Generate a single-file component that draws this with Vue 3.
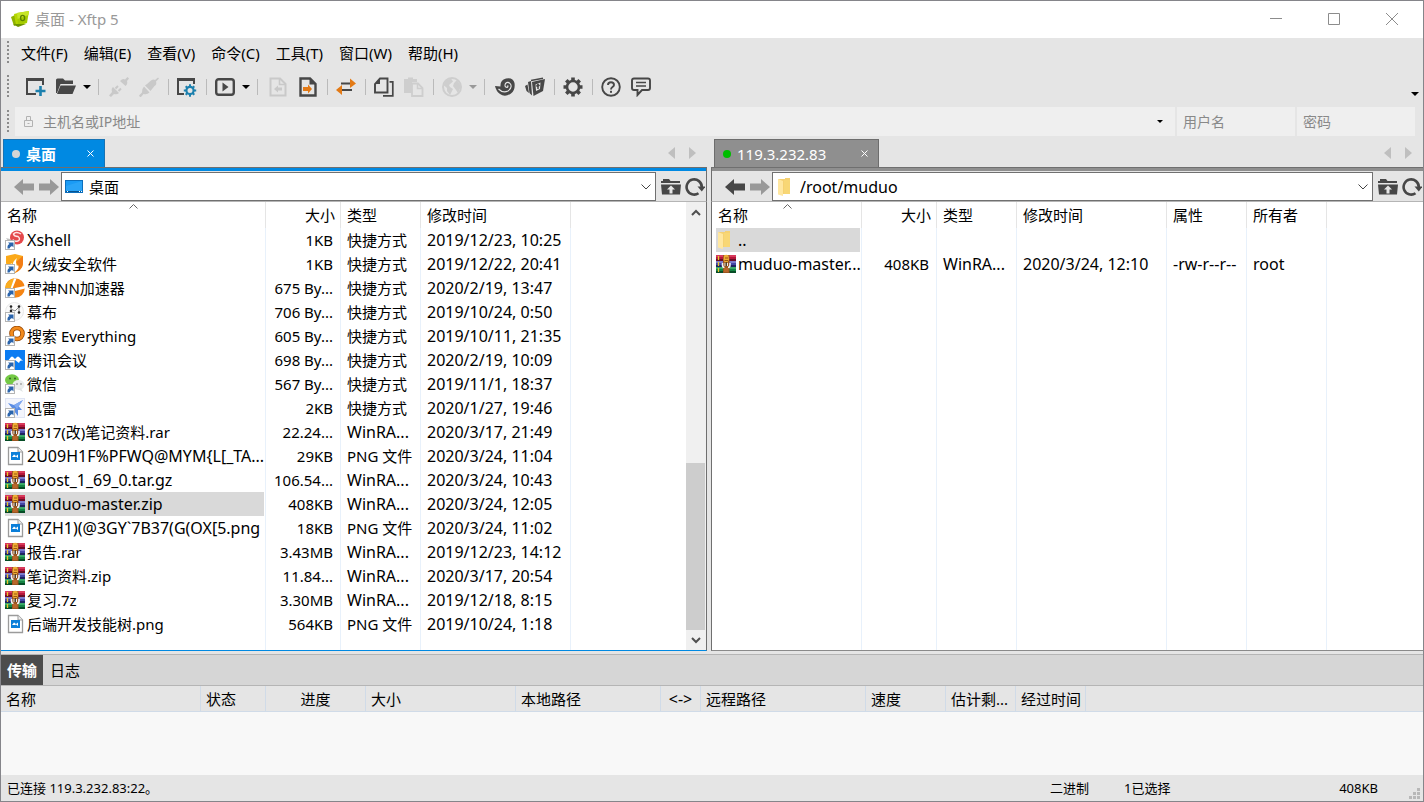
<script setup>
import { ref } from 'vue'

const dk = '#474747'
const badge = '<rect x="0.5" y="10.5" width="9" height="9" fill="#fff" stroke="#b4b4b4"/><path d="M2.500 18.500V16.500Q2.500 14.500 4.500 14L3 12.500H8.500V17.500L7 16Q5 16.500 4.500 18.500Z" fill="#2a64ac"/>'

const icons = {
  logo: '<path d="M1 8 5 6 7 16 4 17Z" fill="#8fb300"/><path d="M4 5 8 4 9 17 6 16Z" fill="#b4d600"/><path d="M7 4 19 2 17 14 8 17Z" fill="#a5cc00"/><path d="M7 4 19 2 18.500 6 7.500 10Z" fill="#c6e526"/><ellipse cx="12.600" cy="9" rx="2" ry="2.600" fill="none" stroke="#5c8300" stroke-width="1.400"/><path d="M3 15 16 15 8 18Z" fill="#6e9400"/>',
  newsession: `<path d="M0 1H18V4H0Z" fill="${dk}"/><path d="M1 3V17H10M17 3V8" fill="none" stroke="${dk}" stroke-width="2"/><path d="M14.500 9V19M9.500 14H19.500" stroke="#1c80ae" stroke-width="2.600"/>`,
  open: `<path d="M0 16V3Q0 1.500 1.500 1.500H7L9 3.500H17V7H4.500L1 16Z" fill="${dk}"/><path d="M4.500 8.500H20L16.500 17H1Z" fill="${dk}"/>`,
  unlink: '<g fill="#c9c9c9"><path d="M0 18.500 3 15Q2 11.500 4 10L10 16Q8 18 5 17L2 20Z"/><path d="M11 4Q14 1 16 2.500L18.500 0 20 1.500 18 4Q19 7 16.500 9Z"/></g><path d="M6.500 11.500 9 9M9.500 14 12 11.500" stroke="#c9c9c9" stroke-width="2"/>',
  link: '<path d="M1 20 0 18.500 3 15.500Q2.500 12 5 9.500L10.500 15.500Q8 18 4.500 17L2 20Z" fill="#c9c9c9"/><path d="M6 8.500 8 7 12 3.500Q14.500 2 16 3L19 0.500 20 1.500 17 4.500Q18 7.500 15.500 9L11.500 14Z" fill="#c9c9c9"/>',
  prefs: `<path d="M0 1H18V4H0Z" fill="${dk}"/><path d="M1 3V17H7M17 3V7" fill="none" stroke="${dk}" stroke-width="2"/><g stroke="#1c80ae" fill="none"><circle cx="13" cy="13.500" r="3.600" stroke-width="2.200"/><path d="M13 7.300V10M13 17V19.700M6.800 13.500H9.500M16.500 13.500H19.200M8.700 9.200 10.500 11M15.500 16 17.300 17.800M17.300 9.200 15.500 11M10.500 16 8.700 17.800" stroke-width="2"/></g>`,
  play: `<rect x="1.200" y="2.200" width="17.600" height="15.600" rx="2.500" fill="none" stroke="${dk}" stroke-width="2.400"/><path d="M7.500 5.500 13.500 10 7.500 14.500Z" fill="${dk}"/>`,
  docin: '<path d="M2.500 1.500H12L17.500 7V18.500H2.500Z" fill="none" stroke="#c9c9c9" stroke-width="2"/><path d="M11.500 1V7.500H18" fill="none" stroke="#c9c9c9" stroke-width="1.600"/><path d="M6 12 10 8.500V10.500H14V13.500H10V15.500Z" fill="#c9c9c9"/>',
  docout: `<path d="M2.500 1.500H12L17.500 7V18.500H2.500Z" fill="none" stroke="${dk}" stroke-width="2.400"/><path d="M11.500 1V7.500H18Z" fill="${dk}"/><path d="M14 12 10 7.500V10H5V14H10V16.500Z" fill="#e37a16"/>`,
  swap: `<path d="M5 6.500H14M6 13H16" stroke="${dk}" stroke-width="2.200"/><path d="M14 1.500 20 6.500 14 11Z" fill="#e37a16"/><path d="M6 8 0 13 6 18Z" fill="#e37a16"/>`,
  copy: `<path d="M6 1.500H13.500V15.500H1V7Z" fill="none" stroke="${dk}" stroke-width="1.900"/><path d="M1 7 6 1.500V7Z" fill="${dk}"/><path d="M15.500 4.800H18.800V18.800H9" fill="none" stroke="${dk}" stroke-width="1.700"/>`,
  paste: '<path d="M0 2H4V0.500H9V2H13V5H8V16H0Z" fill="#cecece"/><path d="M8 6.500H14L18.500 11V19H8Z" fill="#e5e5e5" stroke="#cecece" stroke-width="1.800"/><path d="M13.500 6.500V11.500H18.500" fill="none" stroke="#cecece" stroke-width="1.500"/>',
  globe: '<circle cx="10" cy="10" r="9" fill="none" stroke="#cecece" stroke-width="2"/><path d="M3 4 9 1.500 11 4.500 7 8 8 10 11 12 8 18 5 14 5 11 1.500 8ZM12 6 15 3 19 9 16 16 14 13 11 9Z" fill="#cecece"/>',
  shell: `<path d="M0 9 5.500 9.500Q5 3 11 1.500 18 0 19.500 6 20.500 13 16 16.500 10 20.500 5 17 1 14 0 9Z" fill="${dk}"/><path d="M3.500 12Q8 16.500 13 14 17.500 11 15.500 7 13 4 10.500 6.500 9 10 12 10.500 13.500 9.500 12.500 8.500" fill="none" stroke="#e5e5e5" stroke-width="1.100"/>`,
  ftp: `<path d="M7 5 20 2 18 14 8.500 19Z" fill="${dk}"/><path d="M3 5 6 4 7 18.500 4.500 16ZM0 9 2.500 7.500 4 16 1.500 14Z" fill="${dk}"/><path d="M6 3.500 18 1.200" stroke="${dk}" stroke-width="1.400"/><path d="M10.500 7.500 15.500 5.500 15 12 11 14Z" fill="#e5e5e5"/><path d="M13 7V12M11.500 9.500 13 7.500 14.500 9" fill="none" stroke="${dk}" stroke-width="1.500"/>`,
  gear: `<path d="M10 0.500V4M10 16V19.500M0.500 10H4M16 10H19.500M3.300 3.300 5.500 5.500M14.500 14.500 16.700 16.700M16.700 3.300 14.500 5.500M5.500 14.500 3.300 16.700" stroke="${dk}" stroke-width="3.600"/><circle cx="10" cy="10" r="6" fill="none" stroke="${dk}" stroke-width="2.600"/>`,
  help: `<circle cx="10" cy="10" r="8.800" fill="none" stroke="${dk}" stroke-width="1.900"/><path d="M7 8Q7 5.200 10 5.200T13 8Q13 9 11.500 10 10 11 10 12.500" fill="none" stroke="${dk}" stroke-width="1.900"/><rect x="9" y="13.800" width="2" height="2" fill="${dk}"/>`,
  chat: `<path d="M3 1.500H17Q19 1.500 19 3.500V11Q19 13 17 13H11L6.500 18V13H3Q1 13 1 11V3.500Q1 1.500 3 1.500Z" fill="none" stroke="${dk}" stroke-width="1.900"/><path d="M5 5.500H15M5 9H15" stroke="${dk}" stroke-width="1.400"/>`,
  back: '<path d="M0 10 9 2V6.500H20V13.500H9V18Z" fill="currentColor"/>',
  forward: '<path d="M20 10 11 2V6.500H0V13.500H11V18Z" fill="currentColor"/>',
  up: `<path d="M0 4H2V2H8L9.500 4H19V6H0ZM0 7.500H20L19 17.500H1Z" fill="${dk}"/><path d="M10 8.500 14 12.500H11.500V16.500H8.500V12.500H6Z" fill="#e5e5e5"/>`,
  reload: `<path d="M16.800 10A7.600 7.600 0 1 0 13.500 16.300" fill="none" stroke="${dk}" stroke-width="2.600"/><path d="M12.500 9.500H20.500L16.800 14.500Z" fill="${dk}"/>`,
  folder: '<path d="M2 2H9V1H14V17H6Z" fill="#f5d172"/><path d="M2 2 7 4V19L2 17.500Z" fill="#ffe7a0"/><path d="M8 3H14V17H8Z" fill="#f8d775"/>',
  desktop: '<rect x="0.500" y="3.500" width="17" height="12" fill="#1a9bf5" stroke="#0c6fbd"/><path d="M1 9 17 4V14H1Z" fill="#35aaf9" opacity="0.600"/><path d="M1 14.500H17" stroke="#075390"/><path d="M2 14.500H4M14 14.500H17" stroke="#fff" stroke-dasharray="1 1"/>',
  rar: '<rect y="1" width="20" height="6" fill="#b5163b"/><rect y="1" width="20" height="2" fill="#d83a5c"/><rect y="5" width="20" height="2" fill="#6c0c25"/><rect y="7" width="20" height="6" fill="#4346a5"/><rect y="7" width="20" height="2" fill="#7c7ccb"/><rect y="11" width="20" height="2" fill="#1d2460"/><rect y="13" width="20" height="6" fill="#158443"/><rect y="13" width="20" height="2" fill="#3ba968"/><rect y="17" width="20" height="2" fill="#064d26"/><path d="M2.500 2V6M2.500 8V12M2.500 14V18" stroke="#e9c52e" stroke-width="1.300"/><rect x="7" y="1" width="6.500" height="18" fill="#9b5520"/><path d="M8 1.500Q10 0 12.500 1.500L13 6 11 9H9L7.500 6Z" fill="#f0ad35"/><path d="M9 4H12M8.500 6.500H12" stroke="#9a5611"/><path d="M6.500 9V11Q6.500 13.500 8.500 13.500M14 9V11Q14 13.500 12 13.500" fill="none" stroke="#f2f2f2" stroke-width="1.600"/><path d="M8.500 9H12V12H8.500Z" fill="#eee"/><path d="M10.200 8V12" stroke="#4f3519" stroke-width="1.500"/><path d="M8 14H12.500V18H8Z" fill="#b8672a"/>',
  png: '<path d="M3.500 1.500H13L17.500 6V18.500H3.500Z" fill="#fff" stroke="#9b9b9b" stroke-width="1.300"/><path d="M13 1.500V6H17.500" fill="#eee" stroke="#9b9b9b"/><rect x="6" y="6" width="9" height="8" fill="#0b7fd9"/><path d="M7 11 9 8.500 11 10 13 8.500V12L11 10.500 10 11Z" fill="#fff"/>',
  xshell: `<circle cx="12" cy="7.500" r="7" fill="#e4494c"/><path d="M1 8 5 9 10 16 3 11Z" fill="#c0c0c0"/><path d="M16 4Q11 1 8.500 4 9 6.500 13 6.500 16 9 13 11 9 12 8 9.500" fill="none" stroke="#ffe6e6" stroke-width="1.400"/>${badge}`,
  huorong: `<path d="M1 2 10 0 18 2V10Q17 16 10 19 2 16 1 9Z" fill="#fba919"/><path d="M18 2V10Q17 16 10 19 15 12 11 8Z" fill="#f27d16"/><path d="M12 4Q7 8 8 11L6 9Q3 16 10 18 15 14 13 11L12 12Q10 8 12 4Z" fill="#fff"/>${badge}`,
  leishen: `<circle cx="10" cy="10" r="9.800" fill="#f58513"/><path d="M1 6Q5 1 9 0.500L6 11H0Z" fill="#f9ae22"/><path d="M9 0.500H11.500L7.500 10.500 20 8V10.500L8 13.500 5 12Z" fill="#fff"/>${badge}`,
  mubu: `<rect x="0.500" y="0.500" width="18" height="18" rx="9" fill="#fafafa" stroke="#e8e8e8"/><path d="M6 5V9M6 7L10 9 14 5V10" fill="none" stroke="#888" stroke-width="1"/><g fill="#222"><circle cx="6" cy="4.500" r="1.300"/><circle cx="14" cy="4.500" r="1.300"/><circle cx="6" cy="9" r="1.300"/><circle cx="14" cy="10.500" r="1.300"/></g>${badge}`,
  everything: `<circle cx="12" cy="7.500" r="5.500" fill="none" stroke="#9a4a05" stroke-width="4.600"/><circle cx="12" cy="7.500" r="5.500" fill="none" stroke="#f28a1c" stroke-width="3"/><path d="M7 12 2 18" stroke="#e07b16" stroke-width="3.500"/>${badge}`,
  meeting: `<rect width="20" height="20" fill="#0b7cf2"/><path d="M2 12 6 7Q7 6 8 7L10 9 12 7Q13 6 14 7L18 11Q15 9.500 14 13L10 10Z" fill="#fff"/>${badge}`,
  wechat: `<ellipse cx="7" cy="6" rx="7" ry="5.800" fill="#75c946"/><path d="M3 9 2 13 7 11Z" fill="#75c946"/><ellipse cx="13.500" cy="11" rx="6" ry="5" fill="#e9ecec"/><path d="M16 14 18 18 13 15Z" fill="#dfe3e3"/><g fill="#336322"><circle cx="5" cy="4.500" r="1"/><circle cx="10" cy="4.500" r="1"/></g><g fill="#777"><circle cx="12" cy="10" r="0.800"/><circle cx="16" cy="10" r="0.800"/></g>${badge}`,
  xunlei: `<rect x="0.500" y="0.500" width="19" height="19" fill="#f3f5fc" stroke="#dfe4f4"/><path d="M3 5 9 7 18 2 13.500 8 17 12 13 12 13 18 9 13 3 15 7 10Z" fill="#5a8ce3"/><path d="M9 7 18 2 12 11Z" fill="#7fa9f2"/>${badge}`
}

const menus = ['文件(F)', '编辑(E)', '查看(V)', '命令(C)', '工具(T)', '窗口(W)', '帮助(H)']
const tools = [
  ['newsession', '新建'], ['open', '打开'], ['arrow', '打开列表'], ['sep wide'],
  ['unlink', '断开'], ['link', '连接'], ['sep'],
  ['prefs', '属性'], ['sep'],
  ['play', '执行'], ['arrow', '执行列表'], ['sep wide'],
  ['docin', '下载'], ['docout', '上传'], ['sep'],
  ['swap', '同步'], ['sep'],
  ['copy', '复制'], ['paste', '粘贴'], ['sep'],
  ['globe', '语言'], ['arrow dim', '语言列表'], ['sep wide'],
  ['shell', 'Xshell'], ['ftp', 'Xftp'], ['sep'],
  ['gear', '选项'], ['sep'],
  ['help', '帮助'], ['chat', '反馈']
]

const lnk = '快捷方式'
const panes = ref([
  {
    key: 'local', tab: '桌面', path: '桌面', pathIcon: 'desktop', scroll: true,
    cols: [['名称', 'c-local'], ['大小', 'c-size'], ['类型', 'c-type'], ['修改时间', 'c-date']],
    rows: [
      ['xshell', 'Xshell', '1KB', lnk, '2019/12/23, 10:25'],
      ['huorong', '火绒安全软件', '1KB', lnk, '2019/12/22, 20:41'],
      ['leishen', '雷神NN加速器', '675 By...', lnk, '2020/2/19, 13:47'],
      ['mubu', '幕布', '706 By...', lnk, '2019/10/24, 0:50'],
      ['everything', '搜索 Everything', '605 By...', lnk, '2019/10/11, 21:35'],
      ['meeting', '腾讯会议', '698 By...', lnk, '2020/2/19, 10:09'],
      ['wechat', '微信', '567 By...', lnk, '2019/11/1, 18:37'],
      ['xunlei', '迅雷', '2KB', lnk, '2020/1/27, 19:46'],
      ['rar', '0317(改)笔记资料.rar', '22.24...', 'WinRA...', '2020/3/17, 21:49'],
      ['png', '2U09H1F%PFWQ@MYM{L[_TA...', '29KB', 'PNG 文件', '2020/3/24, 11:04'],
      ['rar', 'boost_1_69_0.tar.gz', '106.54...', 'WinRA...', '2020/3/24, 10:43'],
      ['rar', 'muduo-master.zip', '408KB', 'WinRA...', '2020/3/24, 12:05'],
      ['png', 'P{ZH1)(@3GY`7B37(G(OX[5.png', '18KB', 'PNG 文件', '2020/3/24, 11:02'],
      ['rar', '报告.rar', '3.43MB', 'WinRA...', '2019/12/23, 14:12'],
      ['rar', '笔记资料.zip', '11.84...', 'WinRA...', '2020/3/17, 20:54'],
      ['rar', '复习.7z', '3.30MB', 'WinRA...', '2019/12/18, 8:15'],
      ['png', '后端开发技能树.png', '564KB', 'PNG 文件', '2019/10/24, 1:18']
    ],
    selected: 11
  },
  {
    key: 'remote', tab: '119.3.232.83', path: '/root/muduo', pathIcon: 'folder', scroll: false,
    cols: [['名称', 'c-remote'], ['大小', 'c-size'], ['类型', 'c-type'], ['修改时间', 'c-date'], ['属性', 'c-type'], ['所有者', 'c-type']],
    rows: [
      ['folder', '..', '', '', '', '', ''],
      ['rar', 'muduo-master...', '408KB', 'WinRA...', '2020/3/24, 12:10', '-rw-r--r--', 'root']
    ],
    selected: 0
  }
])

const queue = [
  ['名称', 'q-name'], ['状态', 'q-state'], ['进度', 'q-progress'], ['大小', 'q-size'], ['本地路径', 'q-local'],
  ['<->', 'q-dir'], ['远程路径', 'q-remote'], ['速度', 'q-speed'], ['估计剩...', 'q-left'], ['经过时间', 'q-left']
]
const bottomTab = ref('传输')
const isLatin = (s) => /^[\x20-\x7e]+$/.test(s)
</script>

<template>
  <div class="window">
    <header class="title">
      <svg class="ico" viewBox="0 0 20 20" v-html="icons.logo"></svg>
      <h1>桌面 - Xftp 5</h1>
      <div class="controls">
        <button aria-label="最小化"><svg width="12" height="12"><path d="M0 5.500H12" /></svg></button>
        <button aria-label="最大化"><svg width="12" height="12"><path d="M0.500 0.500H11.500V11.500H0.500Z" /></svg></button>
        <button aria-label="关闭"><svg width="12" height="12"><path d="M0 0 12 12M12 0 0 12" /></svg></button>
      </div>
    </header>

    <nav class="menu">
      <i class="grip"></i>
      <button v-for="m in menus" :key="m">{{ m }}</button>
    </nav>

    <div class="toolbar">
      <i class="grip"></i>
      <template v-for="(t, i) in tools" :key="i">
        <i v-if="t[0].startsWith('sep')" :class="t[0]"></i>
        <button v-else-if="t[0].startsWith('arrow')" :class="t[0]" :aria-label="t[1]"><i class="caret"></i></button>
        <button v-else class="tool" :aria-label="t[1]"><svg class="ico" viewBox="0 0 20 20" v-html="icons[t[0]]"></svg></button>
      </template>
      <button class="arrow overflow" aria-label="更多"><i class="caret"></i></button>
    </div>

    <form class="address" @submit.prevent>
      <i class="grip"></i>
      <div class="host">
        <svg width="9" height="11" viewBox="0 0 9 11"><path d="M0.500 4.500H8.500V10.500H0.500ZM2.500 4.500V0.500H6.500V4.500M3.500 7.500H5.500" fill="none" stroke="#b2b2b2" /></svg>
        <input type="text" aria-label="主机名或IP地址" placeholder="主机名或IP地址">
        <button type="button" class="arrow" aria-label="历史"><i class="caret small"></i></button>
      </div>
      <input class="cred" type="text" aria-label="用户名" placeholder="用户名">
      <input class="cred" type="password" aria-label="密码" placeholder="密码">
    </form>

    <main class="panes">
      <section v-for="p in panes" :key="p.key" :class="['pane', p.key]">
        <div class="tabs">
          <div class="tab">
            <i class="dot"></i>
            <button class="tab-name">{{ p.tab }}</button>
            <button class="close" aria-label="关闭标签"><svg width="7" height="7"><path d="M0.500 0.500 6.500 6.500M6.500 0.500 0.500 6.500" stroke="#fff" /></svg></button>
          </div>
          <div class="pager">
            <button aria-label="上一个"><svg width="7" height="12"><path d="M7 0V12L0 6Z" fill="#bfbfbf" /></svg></button>
            <button aria-label="下一个"><svg width="7" height="12"><path d="M0 0V12L7 6Z" fill="#bfbfbf" /></svg></button>
          </div>
        </div>
        <div class="pathbar">
          <button class="nav back" aria-label="后退"><svg class="ico" viewBox="0 0 20 20" v-html="icons.back"></svg></button>
          <button class="nav" aria-label="前进"><svg class="ico" viewBox="0 0 20 20" v-html="icons.forward"></svg></button>
          <div class="path">
            <svg class="ico" viewBox="0 0 20 20" v-html="icons[p.pathIcon]"></svg>
            <input v-model="p.path" :class="{ latin: isLatin(p.path) }" type="text" aria-label="路径">
            <button aria-label="展开路径"><svg width="10" height="6"><path d="M0.500 0.500 5 5 9.500 0.500" fill="none" stroke="#444" /></svg></button>
          </div>
          <button class="nav dark" aria-label="上级目录"><svg class="ico" viewBox="0 0 20 20" v-html="icons.up"></svg></button>
          <button class="nav dark" aria-label="刷新"><svg class="ico" viewBox="0 0 20 20" v-html="icons.reload"></svg></button>
        </div>
        <div class="list">
          <div class="files-wrap">
            <table class="files">
              <colgroup><col v-for="(c, i) in p.cols" :key="i" :class="c[1]"><col></colgroup>
              <thead>
                <tr>
                  <th v-for="(c, i) in p.cols" :key="c[0]" :class="{ num: i === 1 }">
                    <svg v-if="i === 0" class="sort" width="9" height="5"><path d="M0.500 4.500 4.500 0.500 8.500 4.500" fill="none" stroke="#666" /></svg>{{ c[0] }}
                  </th>
                  <th></th>
                </tr>
              </thead>
              <tbody>
                <tr v-for="(r, ri) in p.rows" :key="ri" @click="p.selected = ri">
                  <td class="first">
                    <div :class="['name', { on: p.selected === ri }]">
                      <svg class="ico" viewBox="0 0 20 20" v-html="icons[r[0]]"></svg>
                      <span :class="{ latin: isLatin(r[1]) }">{{ r[1] }}</span>
                    </div>
                  </td>
                  <td v-for="(v, vi) in r.slice(2)" :key="vi" :class="{ num: vi === 0, latin: vi > 0 && isLatin(v) }">{{ v }}</td>
                  <td></td>
                </tr>
                <tr class="rest"><td v-for="n in p.cols.length + 1" :key="n"></td></tr>
              </tbody>
            </table>
          </div>
          <div v-if="p.scroll" class="scrollbar">
            <button aria-label="向上滚动"><svg width="10" height="7"><path d="M1 6 5 2 9 6" fill="none" stroke="#505050" stroke-width="2" /></svg></button>
            <div class="track"><i class="thumb"></i></div>
            <button aria-label="向下滚动"><svg width="10" height="7"><path d="M1 1 5 5 9 1" fill="none" stroke="#505050" stroke-width="2" /></svg></button>
          </div>
        </div>
      </section>
    </main>

    <section class="transfer">
      <div class="bottom-tabs">
        <button v-for="t in ['传输', '日志']" :key="t" :class="{ on: bottomTab === t }" @click="bottomTab = t">{{ t }}</button>
      </div>
      <table class="queue">
        <colgroup><col v-for="(q, i) in queue" :key="i" :class="q[1]"><col></colgroup>
        <thead><tr><th v-for="q in queue" :key="q[0]" :class="[q[1], { latin: isLatin(q[0]) }]">{{ q[0] }}</th><th></th></tr></thead>
      </table>
    </section>

    <footer class="status">
      <span class="conn">已连接 119.3.232.83:22。</span>
      <span class="mode">二进制</span>
      <span class="sel">1已选择</span>
      <span class="total">408KB</span>
      <svg class="resize" width="11" height="11"><path d="M8 0h3v3H8zM4 4h3v3H4zM8 4h3v3H8zM0 8h3v3H0zM4 8h3v3H4zM8 8h3v3H8z" fill="#b8b8b8" /></svg>
    </footer>
  </div>
</template>

<style>
body { margin: 0; }
</style>

<style scoped>
* { box-sizing: border-box; }
.window {
  display: flex;
  flex-direction: column;
  min-height: 100vh;
  border: 1px solid #85858a;
  background: #e5e5e5;
  color: #000;
  font: 15px/20px "Noto Sans", "Noto Sans CJK SC", sans-serif;
}
button, input {
  margin: 0;
  padding: 0;
  border: 0;
  background: none;
  color: inherit;
  font: inherit;
  outline: 0;
}
button { display: flex; align-items: center; justify-content: center; white-space: nowrap; }
svg { display: block; flex: none; }
.ico { width: 20px; height: 20px; }

.title { display: flex; align-items: center; height: 37px; padding-left: 9px; background: #fff; }
.title h1 { margin: 0 0 2px 5px; font-size: 15px; font-weight: 400; color: #999; }
.title .ico { margin-bottom: 2px; }
.controls { display: flex; margin: 0 2px 2px auto; }
.controls button { width: 58px; height: 34px; }
.controls path { fill: none; stroke: #8c8c8c; }

.grip {
  flex: none;
  width: 2px;
  height: 24px;
  margin: 0 12px 0 6px;
  background: repeating-linear-gradient(#8b8b8b 0 2px, transparent 2px 4px);
}
.menu { display: flex; align-items: center; height: 32px; padding-bottom: 2px; }
.menu button { margin-right: 16px; }

.toolbar { display: flex; align-items: center; height: 34px; }
.tool { width: 30px; height: 28px; }
.arrow { width: 11px; height: 28px; }
.caret { border: solid transparent; border-width: 4px 4px 0; border-top-color: #000; }
.small { border-width: 3px 3px 0; }
.dim .caret { border-top-color: #999; }
.sep { width: 8px; height: 16px; background: linear-gradient(#bababa, #bababa) center / 1px 100% no-repeat; }
.wide { width: 12px; }
.overflow { margin: 14px 3px 0 auto; height: 14px; }

.address { display: flex; align-items: center; gap: 2px; height: 35px; padding-right: 8px; font-size: 14px; }
.address .grip { margin-right: 4px; }
.host, .cred { height: 29px; background: #efefef; }
.host { display: flex; flex: 1; align-items: center; gap: 10px; padding: 0 10px 0 9px; }
.host input { flex: 1; }
.cred { width: 118px; padding: 0 6px; }
input::placeholder { color: #898989; opacity: 1; }

.panes { display: grid; flex: 1; grid-template-columns: minmax(0, 706fr) minmax(0, 712fr); gap: 4px; }
.pane { --accent: #0089e2; --edge: #0089e2; display: flex; flex-direction: column; min-width: 0; }
.remote { --accent: #8f8f8f; --edge: #8a8a8a; }
.tabs { display: flex; align-items: flex-end; justify-content: space-between; height: 28px; padding-left: 2px; }
.tab {
  display: flex;
  align-items: center;
  width: 102px;
  height: 28px;
  padding: 0 10px 0 8px;
  border: 1px solid #1873b4;
  border-bottom: 0;
  background: var(--accent);
  color: #fff;
}
.remote .tabs { padding-left: 3px; }
.remote .tab { width: 165px; border-color: #6d6d6d; }
.local .tab-name { font-weight: 700; }
.dot { width: 8px; height: 8px; margin-right: 6px; border-radius: 50%; background: #d5d5d5; }
.remote .dot { background: #00bd00; }
.close { margin-left: auto; }
.pager { display: flex; gap: 14px; height: 20px; padding-right: 11px; align-items: flex-start; }

.pathbar {
  display: flex;
  align-items: center;
  gap: 5px;
  height: 34px;
  padding: 4px 2px 0 13px;
  border: 0 solid #6f6f6f;
  border-width: 1px 1px 0 0;
  box-shadow: inset 0 3px var(--accent);
}
.remote .pathbar { border-width: 1px 0 0 1px; }
.nav { color: #999; }
.dark { margin-right: -1px; }
.remote .back { color: #474747; }
.path { display: flex; flex: 1; align-items: center; gap: 4px; height: 29px; margin-left: -3px; padding: 0 4px 0 3px; border: 1px solid #707070; background: #fff; }
.path input { flex: 1; min-width: 0; }
.latin { font-size: 16px; }

.list { display: flex; flex: 1; border: 1px solid #6f6f6f; border-width: 1px 1px 1px 0; border-top-color: #b5b5b5; border-bottom-color: var(--edge); background: #fff; }
.remote .list { border-width: 1px 0 1px 1px; border-left-color: #6f6f6f; }
.files-wrap { flex: 1; min-width: 0; display: grid; }
table { width: 100%; border-collapse: separate; border-spacing: 0; table-layout: fixed; }
th, td { padding: 0 7px 0 6px; text-align: left; font-weight: 400; white-space: nowrap; overflow: hidden; }
.files { height: 100%; }
.files th { position: relative; height: 26px; padding-right: 5px; border-right: 1px solid #e5e5e5; }
.files td { height: 24px; border-right: 1px solid #e8f1fb; }
.files th:last-child, .files td:last-child { border-right: 0; }
.files .rest td { height: auto; }
.files .num { text-align: right; }
.files .first { padding: 0 1px 0 4px; }
.sort { position: absolute; top: 2px; left: calc(50% - 4px); }
.name { display: flex; align-items: center; gap: 2px; height: 24px; }
.name.on { background: #d9d9d9; }
.c-local { width: 265px; }
.c-remote { width: 150px; }
.c-size { width: 75px; }
.c-type { width: 80px; }
.c-date { width: 150px; }

.scrollbar { display: flex; flex-direction: column; width: 20px; background: #f0f0f0; }
.scrollbar button { height: 20px; }
.track { display: flex; flex: 1; flex-direction: column; justify-content: flex-end; }
.thumb { height: 41%; margin-right: 1px; background: #cdcdcd; }

.transfer { margin-top: 3px; height: 121px; border-top: 1px solid #b5b5b5; background: #f8f8f8; }
.bottom-tabs { display: flex; height: 31px; border-bottom: 1px solid #b5b5b5; background: #d6d6d6; }
.bottom-tabs button { width: 42px; }
.bottom-tabs .on { background: #4c4c4c; color: #fff; font-weight: 700; }
.bottom-tabs button:last-child { margin-left: 1px; }
.queue th { height: 26px; padding: 0 5px; border: solid #d0dbe8; border-width: 0 1px 1px 0; background: #e5e5e5; }
.queue th:last-child { border-right: 0; }
.queue th.q-progress, .queue th.q-dir { text-align: center; }
.q-name { width: 200px; }
.q-state { width: 65px; }
.q-progress { width: 100px; }
.q-size { width: 150px; }
.q-local { width: 145px; }
.q-dir { width: 40px; }
.q-remote { width: 165px; }
.q-speed { width: 80px; }
.q-left { width: 70px; }

.status { position: relative; display: flex; align-items: center; height: 26px; padding: 0 45px 0 6px; font-size: 13px; }
.conn { flex: 1; }
.mode { width: 74px; }
.sel { width: 147px; }
.total { width: 107px; text-align: right; }
.resize { position: absolute; right: 3px; bottom: 2px; }
</style>
